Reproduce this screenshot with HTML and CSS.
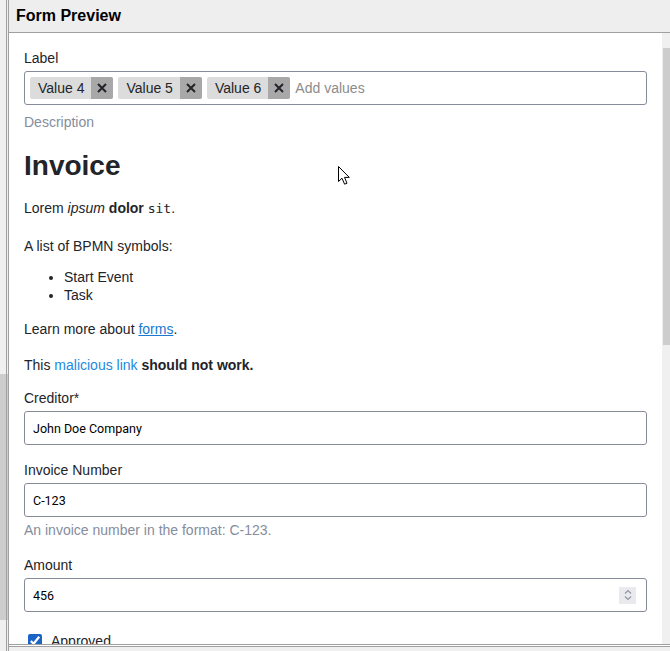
FILE: index.html
```html
<!DOCTYPE html>
<html lang="en">
<head>
  <meta charset="UTF-8" />
  <title>Form Preview</title>
  <link rel="stylesheet" href="styles.css">
</head>
<body>
  <div class="frame">
    <div class="side"></div>
    <div class="panel">
      <div class="panel-header">Form Preview</div>
      <div class="panel-body">
        <div class="content">

          <div class="field">
            <label class="label">Label</label>
            <div class="taglist">
              <span class="tag"><span class="tag-text">Value 4</span><span class="tag-remove"><svg width="10" height="10" viewBox="0 0 10 10"><path d="M1 1L9 9M9 1L1 9" stroke="#22242a" stroke-width="2"/></svg></span></span>
              <span class="tag"><span class="tag-text">Value 5</span><span class="tag-remove"><svg width="10" height="10" viewBox="0 0 10 10"><path d="M1 1L9 9M9 1L1 9" stroke="#22242a" stroke-width="2"/></svg></span></span>
              <span class="tag"><span class="tag-text">Value 6</span><span class="tag-remove"><svg width="10" height="10" viewBox="0 0 10 10"><path d="M1 1L9 9M9 1L1 9" stroke="#22242a" stroke-width="2"/></svg></span></span>
              <input class="tag-input" type="text" placeholder="Add values" />
            </div>
            <div class="description">Description</div>
          </div>

          <div class="markdown">
            <h1>Invoice</h1>
            <p>Lorem <em>ipsum</em> <strong>dolor</strong> <code>sit</code>.</p>
            <p class="list-intro">A list of BPMN symbols:</p>
            <ul>
              <li>Start Event</li>
              <li>Task</li>
            </ul>
            <p class="learn">Learn more about <a class="link" href="#">forms</a>.</p>
            <p class="last">This <span class="bad-link">malicious link</span> <strong>should not work.</strong></p>
          </div>

          <div class="field">
            <label class="label">Creditor*</label>
            <input class="input" type="text" value="John Doe Company" />
          </div>

          <div class="field">
            <label class="label">Invoice Number</label>
            <input class="input" type="text" value="C-123" />
            <div class="description">An invoice number in the format: C-123.</div>
          </div>

          <div class="field">
            <label class="label">Amount</label>
            <div class="number-box">
              <input class="number-input" type="text" value="456" />
              <span class="spinner">
                <svg width="16" height="16" viewBox="0 0 16 16"><path d="M5 6.5L8 3.5L11 6.5M5 9.5L8 12.5L11 9.5" fill="none" stroke="#9096a6" stroke-width="1.2"/></svg>
              </span>
            </div>
          </div>

          <div class="check-row">
            <input class="checkbox" type="checkbox" checked />
            <span>Approved</span>
          </div>

        </div>
        <div class="scrollbar">
          <div class="arrow-up"></div>
          <div class="thumb"></div>
          <div class="track-rest"></div>
          <div class="arrow-down"></div>
        </div>
        <svg class="cursor" width="13" height="20" viewBox="0 0 13 20"><path d="M0.5 0.5L0.5 15.5L4 12.2L6.6 18.2L9 17.2L6.5 11.4L11.3 11.4Z" fill="#fff" stroke="#000" stroke-width="1"/></svg>
      </div>
    </div>
  </div>
</body>
</html>
```

FILE: styles.css
```css
body {
  margin: 0;
  background: #f0f0f0;
  font-family: 'Liberation Sans', Arial, sans-serif;
  color: #22242a;
}

.frame {
  display: flex;
  height: 651px;
  overflow: hidden;
}

.side {
  width: 6px;
  flex-shrink: 0;
  background: linear-gradient(#f0f0f0 0, #f0f0f0 374px, #cdcdcd 374px, #cdcdcd 620px, #f0f0f0 620px);
  border-right: 3px double #a0a0a0;
}

.panel {
  flex: 1;
  display: flex;
  flex-direction: column;
  height: 644px;
  border-bottom: 3px double #a0a0a0;
  background: #fff;
}

.panel-header {
  height: 32px;
  line-height: 32px;
  padding-left: 7px;
  background: #eeeeee;
  border-bottom: 1px solid #a0a0a0;
  font-family: 'Liberation Sans', Arial, sans-serif;
  font-weight: bold;
  font-size: 16px;
  color: #000;
}

.panel-body {
  flex: 1;
  display: flex;
  position: relative;
  overflow: hidden;
}

.content {
  flex: 1;
  padding: 15px 15px 0 15px;
  font-size: 14px;
}

.field {
  margin-bottom: 15px;
}

.label {
  display: block;
  line-height: 20px;
  margin-bottom: 3px;
}

.taglist {
  display: flex;
  align-items: center;
  gap: 5px;
  height: 32px;
  padding: 0 5px;
  border: 1px solid #868b99;
  border-radius: 3px;
}

.tag {
  display: flex;
  height: 22px;
  background: #dcdcdc;
  border-radius: 2px;
  overflow: hidden;
}

.tag-text {
  padding: 0 7px 0 8px;
  line-height: 22px;
}

.tag-remove {
  width: 22px;
  display: flex;
  align-items: center;
  justify-content: center;
  background: #a8a8a8;
}

.tag-input {
  flex: 1;
  border: none;
  outline: none;
  font-family: 'Liberation Sans', Arial, sans-serif;
  font-size: 14px;
  padding: 0;
}

.tag-input::placeholder {
  color: #8c8c8c;
}

.description {
  color: #868d9d;
  line-height: 20px;
  margin-top: 7px;
}

.markdown h1 {
  font-size: 28px;
  line-height: 35px;
  margin: 16px 0 15px 0;
}

.markdown p {
  line-height: 20px;
  margin: 0 0 17px 0;
}

.markdown p.list-intro {
  margin-bottom: 12px;
}

.markdown p.learn {
  margin-bottom: 16px;
}

.markdown p.last {
  margin-bottom: 13px;
}

.markdown code {
  font-family: 'DejaVu Sans Mono', monospace;
  font-size: 13px;
}

.markdown ul {
  margin: 0 0 15px 0;
  padding-left: 40px;
}

.markdown li {
  line-height: 18px;
}

.link {
  color: #1a78d0;
}

.bad-link {
  color: #1b8ae0;
}

.input {
  display: block;
  box-sizing: border-box;
  width: 100%;
  height: 34px;
  padding: 0 8px;
  border: 1px solid #868b99;
  border-radius: 3px;
  font-family: Roboto, sans-serif;
  font-size: 12.5px;
  color: #000;
}

.field .input + .description {
  margin-top: 3px;
}

.number-box {
  display: flex;
  align-items: center;
  height: 32px;
  padding: 0 10px 0 8px;
  border: 1px solid #868b99;
  border-radius: 3px;
}

.number-input {
  flex: 1;
  border: none;
  outline: none;
  padding: 0;
  font-family: Roboto, sans-serif;
  font-size: 12.5px;
  color: #000;
}

.spinner {
  display: flex;
  width: 17px;
  height: 17px;
  align-items: center;
  justify-content: center;
  background: #eaeaee;
}

.check-row {
  display: flex;
  align-items: center;
  gap: 9px;
  padding-left: 4px;
  margin-top: 21px;
}

.checkbox {
  margin: 0;
  width: 14px;
  height: 14px;
  accent-color: #1a64c8;
}

.scrollbar {
  width: 8px;
  display: flex;
  flex-direction: column;
  background: #f0f0f0;
}

.arrow-up {
  height: 15px;
}

.thumb {
  height: 297px;
  margin-left: 1px;
  background: #cdcdcd;
}

.track-rest {
  flex: 1;
}

.arrow-down {
  height: 12px;
}

.cursor {
  position: absolute;
  left: 329px;
  top: 133px;
}
```
